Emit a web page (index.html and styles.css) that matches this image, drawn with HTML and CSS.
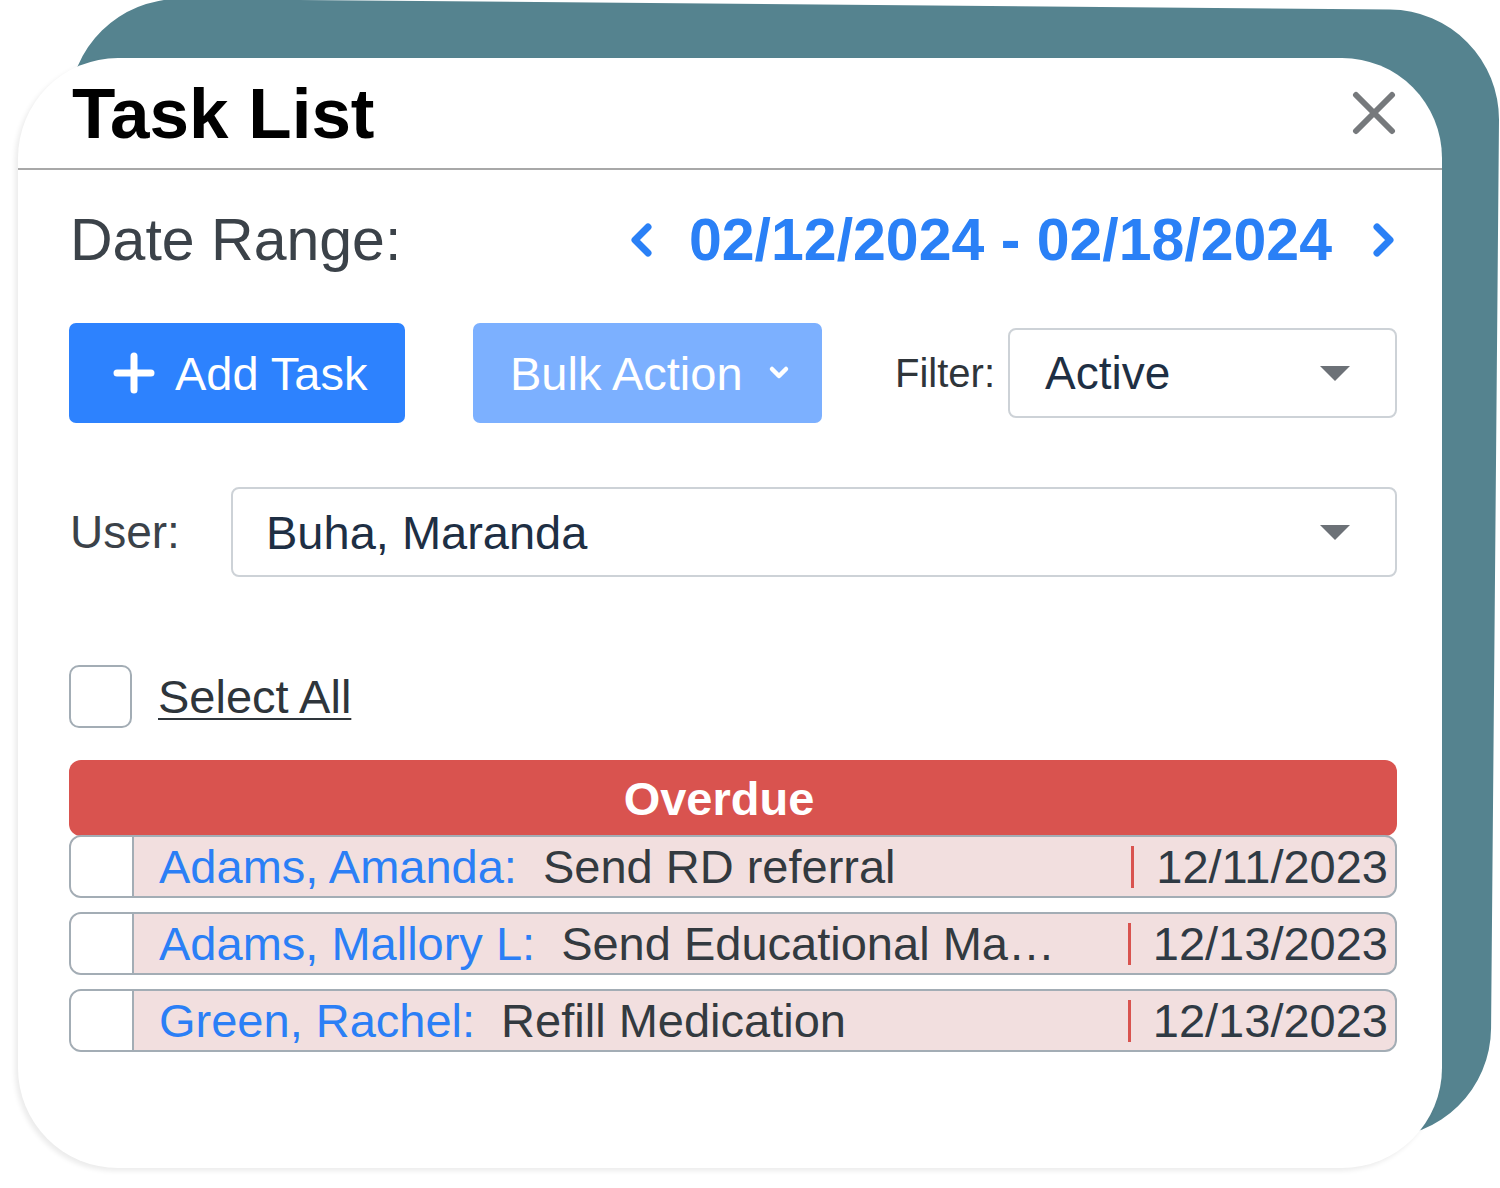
FILE: index.html
```html
<!DOCTYPE html>
<html lang="en">
<head>
    <meta charset="UTF-8">
    <meta name="viewport" content="width=device-width, initial-scale=1.0">
    <title>Task List</title>
    <link rel="stylesheet" href="styles.css">
</head>
<body>
    <div class="stage">
        <div class="backdrop"></div>
        <div class="card">
            <div class="card-header">
                <h1>Task List</h1>
                <button class="close-btn" aria-label="Close">
                    <svg width="44" height="44" viewBox="0 0 44 44">
                        <path d="M4 4 L40 40 M40 4 L4 40" stroke="#76797c" stroke-width="6" stroke-linecap="round" fill="none"/>
                    </svg>
                </button>
            </div>
            <div class="card-body">
                <div class="date-row">
                    <span class="date-label">Date Range:</span>
                    <div class="date-nav">
                        <svg class="chev" width="26" height="36" viewBox="0 0 26 36">
                            <path d="M20 5 L7 18 L20 31" stroke="#2a80f6" stroke-width="7" stroke-linecap="round" stroke-linejoin="round" fill="none"/>
                        </svg>
                        <span class="date-range">02/12/2024 - 02/18/2024</span>
                        <svg class="chev" width="26" height="36" viewBox="0 0 26 36">
                            <path d="M6 5 L19 18 L6 31" stroke="#2a80f6" stroke-width="7" stroke-linecap="round" stroke-linejoin="round" fill="none"/>
                        </svg>
                    </div>
                </div>

                <div class="toolbar">
                    <button class="btn btn-primary">
                        <svg width="42" height="42" viewBox="0 0 42 42">
                            <path d="M21 4 V38 M4 21 H38" stroke="#fff" stroke-width="7" stroke-linecap="round" fill="none"/>
                        </svg>
                        <span>Add Task</span>
                    </button>
                    <button class="btn btn-disabled">
                        <span>Bulk Action</span>
                        <svg width="24" height="16" viewBox="0 0 24 16">
                            <path d="M5 4 L12 11 L19 4" stroke="#fff" stroke-width="4.5" stroke-linecap="round" stroke-linejoin="round" fill="none"/>
                        </svg>
                    </button>
                    <div class="filter">
                        <label class="filter-label">Filter:</label>
                        <div class="select select-filter">
                            <span>Active</span>
                            <span class="caret"></span>
                        </div>
                    </div>
                </div>

                <div class="user-row">
                    <label class="user-label">User:</label>
                    <div class="select select-user">
                        <span>Buha, Maranda</span>
                        <span class="caret"></span>
                    </div>
                </div>

                <label class="select-all">
                    <span class="checkbox"></span>
                    <span class="select-all-text">Select All</span>
                </label>

                <div class="group-header">Overdue</div>
                <ul class="task-list">
                    <li class="task">
                        <span class="task-check"></span>
                        <span class="task-text"><a class="patient">Adams, Amanda:</a><span class="task-desc">Send RD referral</span></span>
                        <span class="task-date">12/11/2023</span>
                    </li>
                    <li class="task">
                        <span class="task-check"></span>
                        <span class="task-text"><a class="patient">Adams, Mallory L:</a><span class="task-desc">Send Educational Materials</span></span>
                        <span class="task-date">12/13/2023</span>
                    </li>
                    <li class="task">
                        <span class="task-check"></span>
                        <span class="task-text"><a class="patient">Green, Rachel:</a><span class="task-desc">Refill Medication</span></span>
                        <span class="task-date">12/13/2023</span>
                    </li>
                </ul>
            </div>
        </div>
    </div>
</body>
</html>
```

FILE: styles.css
```css
body {
    margin: 0;
    font-family: "Liberation Sans", Arial, sans-serif;
    background-color: #ffffff;
}

.stage {
    position: relative;
    width: 1500px;
    height: 1188px;
    padding: 58px 0 0 18px;
    box-sizing: border-box;
    overflow: hidden;
}

.backdrop {
    position: absolute;
    left: 70px;
    top: -2px;
    width: 1430px;
    height: 1128px;
    background-color: #55838f;
    border-radius: 110px;
    transform-origin: 0 0;
    transform: rotate(0.5deg);
}

.card {
    position: relative;
    width: 1424px;
    height: 1110px;
    background-color: #ffffff;
    border-radius: 100px;
    box-shadow: -3px 3px 5px rgba(0, 0, 0, 0.08);
}

.card-header {
    height: 110px;
    border-bottom: 2px solid #a8a8a8;
    display: flex;
    align-items: center;
    justify-content: space-between;
    padding: 0 46px 0 54px;
}

.card-header h1 {
    margin: 0;
    font-size: 71px;
    line-height: 1;
    font-weight: bold;
    color: #000000;
}

.close-btn {
    border: none;
    background: none;
    padding: 0;
    width: 44px;
    height: 44px;
    display: flex;
}

.card-body {
    padding: 0 45px 0 51px;
}

.date-row {
    height: 140px;
    display: flex;
    align-items: center;
    justify-content: space-between;
}

.date-label {
    font-size: 59px;
    line-height: 1;
    color: #3b4249;
    padding-left: 1px;
}

.date-nav {
    display: flex;
    align-items: center;
}

.date-range {
    font-size: 59px;
    line-height: 1;
    font-weight: bold;
    color: #2a80f6;
    margin: 0 39px 0 35px;
}

.toolbar {
    margin-top: 13px;
    height: 100px;
    display: flex;
    align-items: center;
}

.btn {
    height: 100px;
    border: none;
    border-radius: 7px;
    display: flex;
    align-items: center;
    font-family: inherit;
    font-size: 47px;
    line-height: 1;
    color: #ffffff;
    box-sizing: border-box;
}

.btn-primary {
    width: 336px;
    padding-left: 44px;
    background-color: #2d82fe;
    gap: 20px;
}

.btn-disabled {
    width: 349px;
    padding-left: 37px;
    margin-left: 68px;
    background-color: #7cb0ff;
    gap: 24px;
}

.filter {
    margin-left: auto;
    display: flex;
    align-items: center;
}

.filter-label {
    font-size: 40px;
    color: #2f353a;
    margin-right: 13px;
}

.select {
    height: 90px;
    box-sizing: border-box;
    border: 2px solid #cdd2d7;
    border-radius: 8px;
    display: flex;
    align-items: center;
    justify-content: space-between;
    padding: 0 45px 0 35px;
    font-size: 46px;
    line-height: 1;
    color: #1e2f44;
}

.select-filter {
    width: 389px;
}

.caret {
    width: 0;
    height: 0;
    border-left: 15px solid transparent;
    border-right: 15px solid transparent;
    border-top: 15px solid #6c7177;
}

.user-row {
    margin-top: 64px;
    display: flex;
    align-items: center;
}

.user-label {
    width: 161px;
    font-size: 46px;
    color: #3b4249;
    padding-left: 1px;
}

.select-user {
    flex: 1;
    padding-left: 33px;
    font-size: 47px;
}

.select-all {
    margin-top: 88px;
    display: flex;
    align-items: center;
}

.checkbox {
    width: 63px;
    height: 63px;
    box-sizing: border-box;
    border: 2px solid #a3adb5;
    border-radius: 10px;
}

.select-all-text {
    margin-left: 26px;
    font-size: 47px;
    color: #2e353b;
    text-decoration: underline;
    text-decoration-thickness: 2px;
    text-underline-offset: 5px;
}

.group-header {
    margin-top: 32px;
    height: 76px;
    border-radius: 12px;
    background-color: #d9534f;
    color: #ffffff;
    font-size: 47px;
    font-weight: bold;
    display: flex;
    align-items: center;
    justify-content: center;
    padding-right: 28px;
}

.task-list {
    list-style: none;
    margin: -1px 0 0;
    padding: 0;
}

.task {
    height: 63px;
    box-sizing: border-box;
    display: flex;
    border: 2px solid #a3adb5;
    border-radius: 12px;
    overflow: hidden;
    background-color: #f2dfdf;
    margin-bottom: 14px;
}

.task-check {
    width: 61px;
    flex-shrink: 0;
    background-color: #ffffff;
    border-right: 2px solid #a3adb5;
}

.task-text {
    flex: 1;
    min-width: 0;
    padding: 0 65px 0 25px;
    white-space: nowrap;
    overflow: hidden;
    text-overflow: ellipsis;
    font-size: 47px;
    line-height: 59px;
    color: #333a40;
}

.patient {
    color: #2b7ff6;
}

.task-desc {
    margin-left: 26px;
}

.task-date {
    align-self: center;
    height: 42px;
    line-height: 42px;
    border-left: 3px solid #d9534f;
    padding: 0 7px 0 22px;
    font-size: 47px;
    color: #2f3a44;
}
```
